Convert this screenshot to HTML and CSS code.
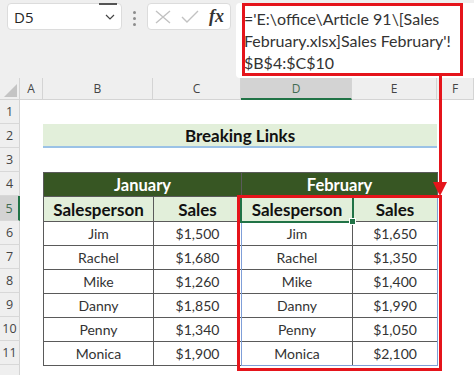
FILE: index.html
```html
<!DOCTYPE html>
<html lang="en">
<head>
    <meta charset="UTF-8">
    <title>Breaking Links</title>
    <link rel="stylesheet" href="styles.css">
</head>
<body>

<div class="window">
    <!-- formula bar -->
    <div class="formula-bar">
        <div class="name-box">
            <span>D5</span>
            <span class="name-tip"></span>
            <svg class="chevron" width="10" height="6" viewBox="0 0 10 6"><path d="M1 1 L5 5 L9 1" fill="none" stroke="#444" stroke-width="1.2"/></svg>
        </div>
        <div class="grip">
            <i></i><i></i><i></i>
        </div>
        <div class="fx-box">
            <svg width="16" height="14" viewBox="0 0 16 14"><path d="M1 1 L15 13 M15 1 L1 13" stroke="#c2c2c2" stroke-width="1.4"/></svg>
            <svg width="18" height="14" viewBox="0 0 18 14"><path d="M1 7 L6 12 L17 1" fill="none" stroke="#c2c2c2" stroke-width="1.4"/></svg>
            <span class="fx">fx</span>
        </div>
        <div class="formula">
            ='E:\office\Article 91\[Sales<br>
            February.xlsx]Sales February'!<br>
            $B$4:$C$10
        </div>
    </div>

    <!-- worksheet -->
    <div class="sheet">
        <div class="corner"><span class="tri"></span></div>
        <div class="col-head">A</div>
        <div class="col-head">B</div>
        <div class="col-head">C</div>
        <div class="col-head active">D</div>
        <div class="col-head">E</div>
        <div class="col-head">F</div>

        <div class="row-head r1">1</div>
        <div class="row-head r2">2</div>
        <div class="row-head r3">3</div>
        <div class="row-head r4">4</div>
        <div class="row-head r5 active">5</div>
        <div class="row-head r6">6</div>
        <div class="row-head r7">7</div>
        <div class="row-head r8">8</div>
        <div class="row-head r9">9</div>
        <div class="row-head r10">10</div>
        <div class="row-head r11">11</div>
        <div class="row-head r12"></div>

        <div class="title">Breaking Links</div>

        <table class="sales">
            <colgroup>
                <col class="w-b"><col class="w-c"><col class="w-d"><col class="w-e">
            </colgroup>
            <tr class="month">
                <td colspan="2">January</td>
                <td colspan="2">February</td>
            </tr>
            <tr class="head">
                <td>Salesperson</td><td>Sales</td>
                <td>Salesperson</td><td>Sales</td>
            </tr>
            <tr><td>Jim</td><td>$1,500</td><td>Jim</td><td>$1,650</td></tr>
            <tr><td>Rachel</td><td>$1,680</td><td>Rachel</td><td>$1,350</td></tr>
            <tr><td>Mike</td><td>$1,260</td><td>Mike</td><td>$1,400</td></tr>
            <tr><td>Danny</td><td>$1,850</td><td>Danny</td><td>$1,990</td></tr>
            <tr><td>Penny</td><td>$1,340</td><td>Penny</td><td>$1,050</td></tr>
            <tr><td>Monica</td><td>$1,900</td><td>Monica</td><td>$2,100</td></tr>
        </table>
    </div>

    <!-- overlays -->
    <div class="ref-range"></div>
    <div class="cell-select"><span class="handle"></span></div>
    <div class="mark-formula"></div>
    <div class="mark-range"></div>
    <div class="arrow-line"></div>
    <div class="arrow-head"></div>
</div>

</body>
</html>
```

FILE: styles.css
```css
body {
    margin: 0;
    background-color: #ffffff;
}

.window {
    position: relative;
    width: 474px;
    height: 375px;
    overflow: hidden;
    background-color: #ffffff;
    font-family: Lato, "Open Sans", sans-serif;
}

/* ---------- formula bar ---------- */

.formula-bar {
    display: flex;
    align-items: flex-start;
    height: 78px;
    padding: 3px 0 0 7px;
    box-sizing: border-box;
    background-color: #efefef;
}

.name-box {
    position: relative;
    display: flex;
    align-items: center;
    justify-content: space-between;
    width: 115px;
    height: 27px;
    padding: 0 6px 0 6px;
    box-sizing: border-box;
    background-color: #ffffff;
    border: 1px solid #dcdcdc;
    border-radius: 4px;
    font-family: "Open Sans", sans-serif;
    font-size: 15px;
    color: #262626;
}

.name-tip {
    position: absolute;
    top: -1px;
    right: 4px;
    width: 18px;
    height: 2px;
    background-color: #555555;
}

.grip {
    display: flex;
    flex-direction: column;
    align-items: center;
    gap: 3px;
    width: 25px;
    padding-top: 8px;
}

.grip i {
    width: 3px;
    height: 3px;
    border-radius: 50%;
    background-color: #8c8c8c;
}

.fx-box {
    display: flex;
    align-items: center;
    gap: 10px;
    width: 84px;
    height: 27px;
    padding-left: 7px;
    box-sizing: border-box;
    background-color: #ffffff;
    border: 1px solid #dcdcdc;
    border-radius: 4px;
}

.fx {
    font-family: "Liberation Serif", serif;
    font-style: italic;
    font-weight: bold;
    font-size: 18px;
    color: #333333;
}

.formula {
    flex: 1;
    height: 75px;
    margin-left: 5px;
    padding: 5px 0 0 8px;
    box-sizing: border-box;
    background-color: #ffffff;
    border-radius: 4px 0 0 4px;
    font-size: 16px;
    line-height: 22px;
    color: #333333;
}

/* ---------- worksheet grid ---------- */

.sheet {
    display: grid;
    grid-template-columns: 20px 23px 110px 88px 111px 85px 1fr;
    grid-template-rows: 22px 24px 24px 24px 24px 25px 24px 24px 24px 24px 24px 24px 1fr;
    height: 297px;
}

.corner {
    position: relative;
    background-color: #efefef;
    border-bottom: 1px solid #d4d4d4;
    border-right: 1px solid #d4d4d4;
}

.tri {
    position: absolute;
    right: 2px;
    bottom: 2px;
    width: 0;
    height: 0;
    border-left: 13px solid transparent;
    border-bottom: 13px solid #c4c4c4;
}

.col-head {
    display: flex;
    align-items: center;
    justify-content: center;
    background-color: #efefef;
    border-bottom: 1px solid #d4d4d4;
    border-right: 1px solid #d4d4d4;
    font-family: "Open Sans", sans-serif;
    font-size: 12px;
    color: #444444;
}

.col-head.active {
    background-color: #d3d3d3;
    border-bottom: 2px solid #217346;
    color: #3f6b52;
}

.row-head {
    grid-column: 1;
    display: flex;
    align-items: center;
    justify-content: center;
    background-color: #efefef;
    border-bottom: 1px solid #d8d8d8;
    border-right: 1px solid #d4d4d4;
    font-family: "Open Sans", sans-serif;
    font-size: 12.5px;
    color: #444444;
}

.row-head.active {
    background-color: #d3d3d3;
    border-right: 2px solid #217346;
    color: #3f6b52;
}

.r1 { grid-row: 2; }
.r2 { grid-row: 3; }
.r3 { grid-row: 4; }
.r4 { grid-row: 5; }
.r5 { grid-row: 6; }
.r6 { grid-row: 7; }
.r7 { grid-row: 8; }
.r8 { grid-row: 9; }
.r9 { grid-row: 10; }
.r10 { grid-row: 11; }
.r11 { grid-row: 12; }
.r12 { grid-row: 13; border-bottom: none; }

.title {
    grid-column: 3 / 7;
    grid-row: 3;
    display: flex;
    align-items: center;
    justify-content: center;
    background-color: #e2efda;
    border-bottom: 2px solid #9bc2e6;
    font-weight: bold;
    font-size: 17px;
    color: #111111;
}

/* ---------- data table ---------- */

.sales {
    grid-column: 3 / 7;
    grid-row: 5 / 13;
    width: 394px;
    table-layout: fixed;
    border-collapse: collapse;
    font-size: 14px;
    color: #333333;
}

.w-b { width: 110px; }
.w-c { width: 88px; }
.w-d { width: 111px; }
.w-e { width: 85px; }

.sales td {
    height: 23px;
    padding: 0;
    text-align: center;
    border: 1px solid #5a5a5a;
}

.sales .month td {
    background-color: #375623;
    color: #ffffff;
    font-weight: bold;
    font-size: 16.5px;
}

.sales .head td {
    height: 24px;
    background-color: #e2efda;
    color: #111111;
    font-weight: bold;
    font-size: 17px;
}

/* ---------- overlays ---------- */

.ref-range {
    position: absolute;
    left: 241px;
    top: 196px;
    width: 195px;
    height: 168px;
    border: 1px solid #7f9fd8;
}

.cell-select {
    position: absolute;
    left: 240px;
    top: 195px;
    width: 110px;
    height: 24px;
    border: 2px solid #217346;
}

.handle {
    position: absolute;
    right: -4px;
    bottom: -4px;
    width: 5px;
    height: 5px;
    background-color: #217346;
    border: 1px solid #ffffff;
}

.mark-formula {
    position: absolute;
    left: 242px;
    top: 3px;
    width: 215px;
    height: 67px;
    border: 3px solid #e5141b;
}

.mark-range {
    position: absolute;
    left: 237px;
    top: 195px;
    width: 199px;
    height: 170px;
    border: 3px solid #e5141b;
}

.arrow-line {
    position: absolute;
    left: 439px;
    top: 76px;
    width: 3px;
    height: 110px;
    background-color: #e5141b;
}

.arrow-head {
    position: absolute;
    left: 433px;
    top: 182px;
    width: 0;
    height: 0;
    border-left: 7.5px solid transparent;
    border-right: 7.5px solid transparent;
    border-top: 14px solid #e5141b;
}
```
